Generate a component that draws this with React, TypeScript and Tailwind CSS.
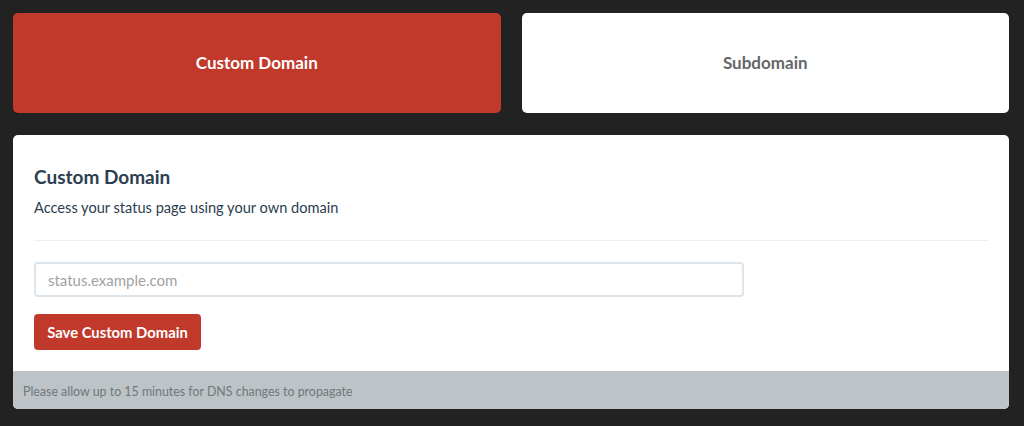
import React from "react";

export default function App() {
  return (
    <div
      className="w-[1024px] h-[426px] bg-[#222222] pl-[13px] pr-[15px] pt-[13px]"
      style={{ fontFamily: "Lato, 'Open Sans', sans-serif" }}
    >
      <div className="flex gap-[21px]">
        <button className="flex-1 h-[100px] rounded-[5px] bg-[#c0392b] text-white font-bold text-[17px] flex items-center justify-center">
          Custom Domain
        </button>
        <button className="flex-1 h-[100px] rounded-[5px] bg-white text-[#666666] font-bold text-[17px] flex items-center justify-center">
          Subdomain
        </button>
      </div>

      <div className="mt-[22px] rounded-[5px] bg-white overflow-hidden">
        <div className="px-[21px] pt-[31px] pb-[21px]">
          <h2 className="text-[19px] leading-[22px] font-bold text-[#2c3e50]">Custom Domain</h2>
          <p className="mt-[10px] text-[14.6px] leading-[20px] text-[#2c3e50]">
            Access your status page using your own domain
          </p>
          <div className="mt-[22px] h-px bg-[#ecf0f1]" />
          <input
            className="mt-[21px] block w-[710px] h-[35px] rounded-[4px] border-2 border-[#dce4ec] px-[12px] text-[15px] text-[#2c3e50] placeholder:text-[#a2a2a2] outline-none"
            placeholder="status.example.com"
          />
          <button className="mt-[17px] block h-[36px] w-[167px] rounded-[4px] bg-[#c0392b] text-white font-bold text-[14.8px]">
            Save Custom Domain
          </button>
        </div>
        <div className="h-[38px] bg-[#bdc3c7] px-[10px] pt-[2px] text-[12.4px] leading-[36px] text-[#6e797a]">
          <div className="translate-y-[1px]">Please allow up to 15 minutes for DNS changes to propagate</div>
        </div>
      </div>
    </div>
  );
}
